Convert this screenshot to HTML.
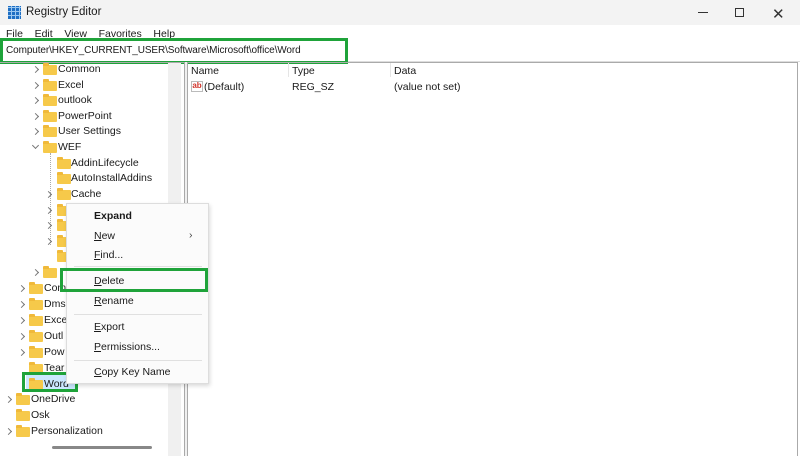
<!DOCTYPE html>
<html><head><meta charset="utf-8"><style>
*{margin:0;padding:0;box-sizing:border-box}
body{width:800px;height:456px;overflow:hidden;background:#fff;font-family:"Liberation Sans",sans-serif;font-size:10.5px;color:#1a1a1a;position:relative}
.a{position:absolute;white-space:nowrap}
.f{position:absolute;width:14px;height:10px;background:#f6c94a;border-radius:1px}
.f:before{content:"";position:absolute;left:0;top:-2px;width:6px;height:3px;background:#f0b93a;border-radius:1px 1px 0 0}
.c{position:absolute;width:5px;height:5px;border-right:1px solid #777;border-bottom:1px solid #777;transform:rotate(-45deg)}
.cd{transform:rotate(45deg)}
.m{position:absolute;left:94px;font-size:10.5px}
.sep{position:absolute;left:74px;width:128px;height:1px;background:#e0e0e0}
.g{position:absolute;border:3px solid #1fa33a}
</style></head><body>
<div class="a" style="left:0;top:0;width:800px;height:25px;background:#f3f3f3"></div>
<div class="a" style="left:8px;top:6px;width:13px;height:13px;background:#1f6fc4"></div>
<div class="a" style="left:8px;top:6px;width:13px;height:13px;background:repeating-linear-gradient(90deg,transparent 0 3px,#9cc8f0 3px 4px),repeating-linear-gradient(0deg,transparent 0 3px,#9cc8f0 3px 4px)"></div>
<div class="a" style="left:26px;top:6px;font-size:11.5px">Registry Editor</div>
<div class="a" style="left:698px;top:12px;width:10px;height:1px;background:#333"></div>
<div class="a" style="left:735px;top:8px;width:9px;height:9px;border:1px solid #333"></div>
<div class="a" style="left:772px;top:5px;font-size:15px;color:#333">✕</div>
<div class="a" style="left:0;top:25px;width:800px;height:16px;background:#fff"></div>
<div class="a" style="left:6px;top:28px">File&nbsp;&nbsp;&nbsp;&nbsp;Edit&nbsp;&nbsp;&nbsp;&nbsp;View&nbsp;&nbsp;&nbsp;&nbsp;Favorites&nbsp;&nbsp;&nbsp;&nbsp;Help</div>
<div class="a" style="left:0;top:40px;width:800px;height:22px;background:#fff;border-bottom:1px solid #ddd"></div>
<div class="a" style="left:6px;top:45px;font-size:10px;letter-spacing:-0.1px">Computer\HKEY_CURRENT_USER\Software\Microsoft\office\Word</div>
<div class="g" style="left:0;top:38px;width:348px;height:26px"></div>
<div class="a" style="left:0;top:62px;width:184px;height:394px;border-top:1px solid #aaa"></div>
<div class="a" style="left:168px;top:63px;width:13px;height:393px;background:#f0f0f0"></div>
<div class="a" style="left:184px;top:62px;width:4px;height:394px;background:#f0f0f0;border-left:1px solid #aaa;border-right:1px solid #aaa"></div>
<div class="a" style="left:188px;top:62px;width:610px;height:394px;border-top:1px solid #aaa;border-right:1px solid #aaa"></div>
<div class="a" style="left:52px;top:446px;width:100px;height:3px;background:#888;border-radius:2px"></div>
<div class="a" style="left:191px;top:65px">Name</div>
<div class="a" style="left:292px;top:65px">Type</div>
<div class="a" style="left:394px;top:65px">Data</div>
<div class="a" style="left:288px;top:63px;width:1px;height:14px;background:#e5e5e5"></div>
<div class="a" style="left:390px;top:63px;width:1px;height:14px;background:#e5e5e5"></div>
<div class="a" style="left:191px;top:81px;width:12px;height:11px;border:1px solid #bbb;color:#d0332a;font-size:8px;font-weight:bold;line-height:8px;text-align:center">ab</div>
<div class="a" style="left:204px;top:81px">(Default)</div>
<div class="a" style="left:292px;top:81px">REG_SZ</div>
<div class="a" style="left:394px;top:81px">(value not set)</div>
<div class="c" style="left:33px;top:67px"></div><div class="f" style="left:43px;top:65px"></div><div class="a" style="left:58px;top:63px">Common</div>
<div class="c" style="left:33px;top:83px"></div><div class="f" style="left:43px;top:81px"></div><div class="a" style="left:58px;top:79px">Excel</div>
<div class="c" style="left:33px;top:98px"></div><div class="f" style="left:43px;top:96px"></div><div class="a" style="left:58px;top:94px">outlook</div>
<div class="c" style="left:33px;top:114px"></div><div class="f" style="left:43px;top:112px"></div><div class="a" style="left:58px;top:110px">PowerPoint</div>
<div class="c" style="left:33px;top:129px"></div><div class="f" style="left:43px;top:127px"></div><div class="a" style="left:58px;top:125px">User Settings</div>
<div class="c cd" style="left:33px;top:143px"></div><div class="f" style="left:43px;top:143px"></div><div class="a" style="left:58px;top:141px">WEF</div>
<div class="a" style="left:50px;top:153px;width:1px;height:92px;border-left:1px dotted #aaa"></div>
<div class="f" style="left:57px;top:159px"></div><div class="a" style="left:71px;top:157px">AddinLifecycle</div>
<div class="f" style="left:57px;top:174px"></div><div class="a" style="left:71px;top:172px">AutoInstallAddins</div>
<div class="c" style="left:46px;top:192px"></div><div class="f" style="left:57px;top:190px"></div><div class="a" style="left:71px;top:188px">Cache</div>
<div class="c" style="left:46px;top:208px"></div><div class="f" style="left:57px;top:206px"></div>
<div class="c" style="left:46px;top:223px"></div><div class="f" style="left:57px;top:221px"></div>
<div class="c" style="left:46px;top:239px"></div><div class="f" style="left:57px;top:237px"></div>
<div class="f" style="left:57px;top:252px"></div>
<div class="c" style="left:33px;top:270px"></div><div class="f" style="left:43px;top:268px"></div>
<div class="c" style="left:19px;top:286px"></div><div class="f" style="left:29px;top:284px"></div><div class="a" style="left:44px;top:282px">Com</div>
<div class="c" style="left:19px;top:302px"></div><div class="f" style="left:29px;top:300px"></div><div class="a" style="left:44px;top:298px">Dms</div>
<div class="c" style="left:19px;top:318px"></div><div class="f" style="left:29px;top:316px"></div><div class="a" style="left:44px;top:314px">Exce</div>
<div class="c" style="left:19px;top:334px"></div><div class="f" style="left:29px;top:332px"></div><div class="a" style="left:44px;top:330px">Outl</div>
<div class="c" style="left:19px;top:350px"></div><div class="f" style="left:29px;top:348px"></div><div class="a" style="left:44px;top:346px">Pow</div>
<div class="f" style="left:29px;top:364px"></div><div class="a" style="left:44px;top:362px">Tear</div>
<div class="a" style="left:26px;top:375px;width:50px;height:15px;background:#cce8ff"></div>
<div class="f" style="left:29px;top:380px"></div><div class="a" style="left:44px;top:378px">Word</div>
<div class="g" style="left:22px;top:372px;width:56px;height:20px"></div>
<div class="c" style="left:6px;top:397px"></div><div class="f" style="left:16px;top:395px"></div><div class="a" style="left:31px;top:393px">OneDrive</div>
<div class="f" style="left:16px;top:411px"></div><div class="a" style="left:31px;top:409px">Osk</div>
<div class="c" style="left:6px;top:429px"></div><div class="f" style="left:16px;top:427px"></div><div class="a" style="left:31px;top:425px">Personalization</div>
<div class="a" style="left:66px;top:203px;width:143px;height:181px;background:#fbfbfb;border:1px solid #ddd;box-shadow:1px 2px 4px rgba(0,0,0,.15)"></div>
<div class="m" style="top:210px;font-weight:bold">Expand</div>
<div class="m" style="top:230px"><u>N</u>ew</div><div class="a" style="left:189px;top:229px;color:#444">›</div>
<div class="m" style="top:249px"><u>F</u>ind...</div>
<div class="sep" style="top:266px"></div>
<div class="m" style="top:275px"><u>D</u>elete</div>
<div class="g" style="left:60px;top:268px;width:148px;height:24px"></div>
<div class="m" style="top:295px"><u>R</u>ename</div>
<div class="sep" style="top:314px"></div>
<div class="m" style="top:321px"><u>E</u>xport</div>
<div class="m" style="top:341px"><u>P</u>ermissions...</div>
<div class="sep" style="top:360px"></div>
<div class="m" style="top:366px"><u>C</u>opy Key Name</div>
</body></html>
